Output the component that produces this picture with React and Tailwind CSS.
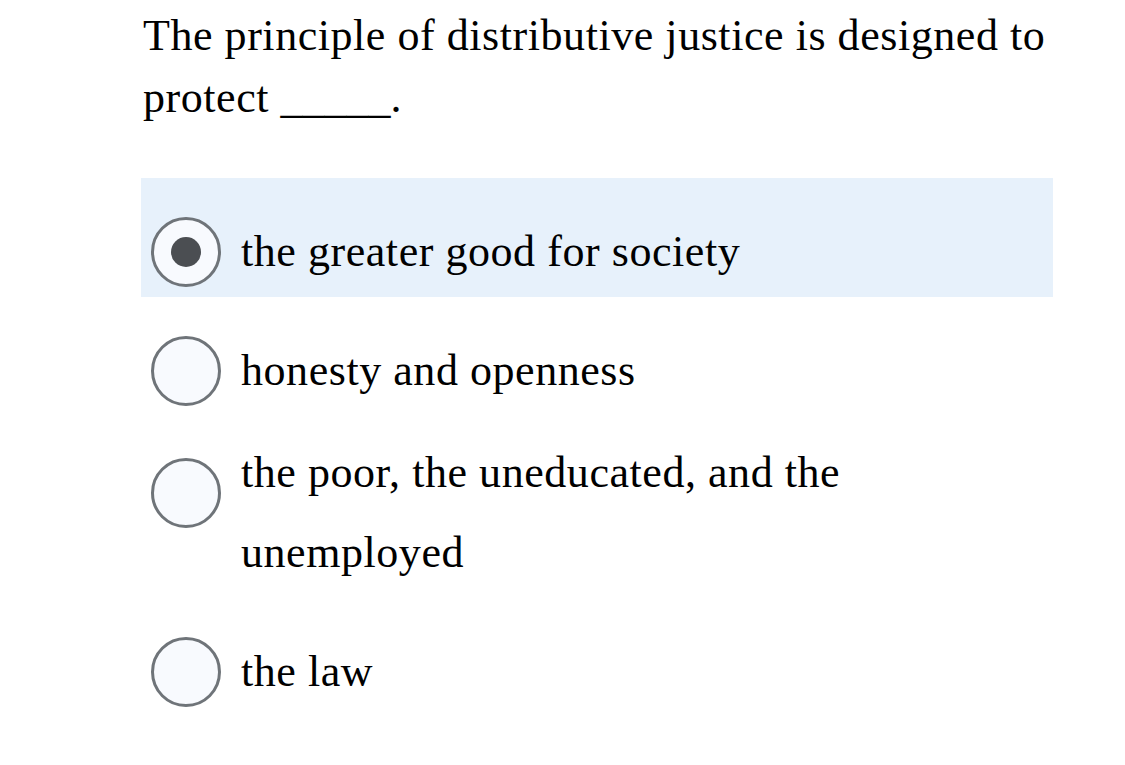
const options = [
  { id: "a", lines: "the greater good for society", selected: true, row: "pt-[34px] pb-[5px]", dot: "mt-[5px]" },
  { id: "b", lines: "honesty and openness", row: "pt-[34px] pb-[5px]", dot: "mt-[5px]" },
  { id: "c", lines: "the poor, the uneducated, and the unemployed", row: "pt-[17px] pb-[5px]", dot: "mt-[25px]" },
  { id: "d", lines: "the law", row: "pt-[34px] pb-[5px]", dot: "mt-[5px]" },
];

function Radio({ selected, className }) {
  return (
    <div
      className={`w-[70px] h-[70px] shrink-0 rounded-full border-[3px] border-[#6f7479] bg-[#f8fafe] flex items-center justify-center ${className}`}
    >
      {selected && <div className="w-[30px] h-[30px] rounded-full bg-[#4b4e52]"></div>}
    </div>
  );
}

export default function App() {
  return (
    <div className="min-h-screen bg-white text-black" style={{ fontFamily: '"Liberation Serif", "Times New Roman", serif' }}>
      <div className="pl-[141px] w-[1053px]">
        <p className="pl-[2px] pt-[5px] text-[44px] leading-[62px] tracking-[0.55px]">
          The principle of distributive justice is designed to protect <span className="tracking-normal">_____</span>.
        </p>

        <div className="mt-[49px] flex flex-col">
          {options.map((opt) => (
            <label
              key={opt.id}
              className={`flex items-start gap-[20px] pl-[10px] pr-4 ${opt.row} ${opt.selected ? "bg-[#e7f1fb]" : ""}`}
            >
              <Radio selected={opt.selected} className={opt.dot} />
              <span className="text-[44px] leading-[80px] tracking-[0.55px] max-w-[640px]">{opt.lines}</span>
            </label>
          ))}
        </div>
      </div>
    </div>
  );
}
